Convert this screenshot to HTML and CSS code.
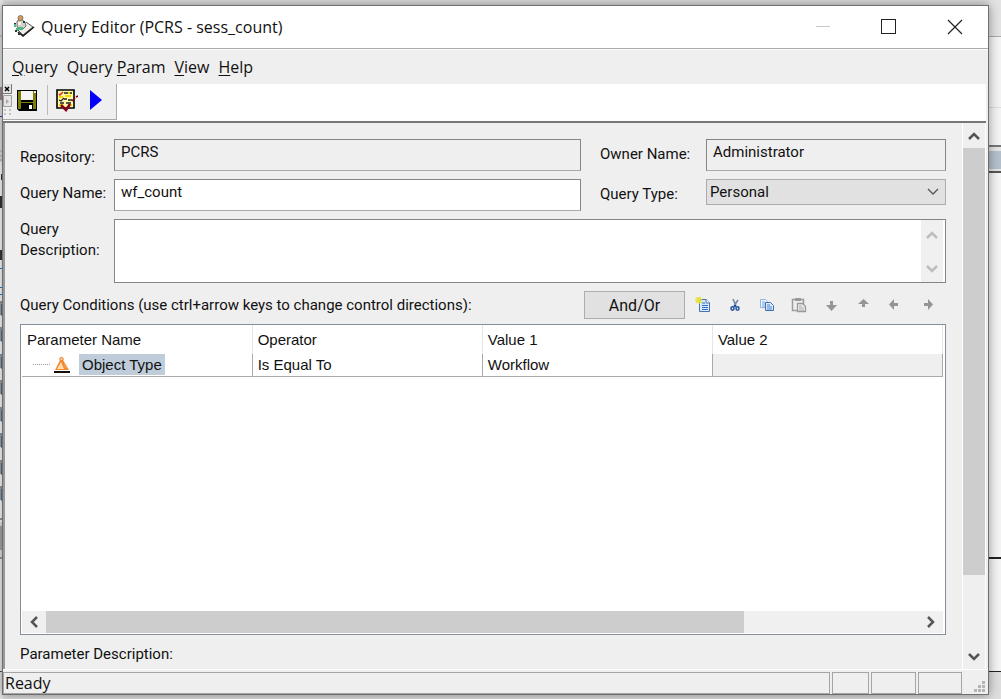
FILE: index.html
```html
<!DOCTYPE html>
<html lang="en">
<head>
<meta charset="utf-8">
<title>Query Editor (PCRS - sess_count)</title>
<link rel="stylesheet" href="styles.css">
</head>
<body>
<div class="desktop">
  <svg class="behind-left" width="3" height="699" viewBox="0 0 3 699" aria-hidden="true">
    <rect width="3" height="699" fill="#e6e6e6"/>
    <path d="M0 36h3M0 151h3M0 156h3M0 160h3" stroke="#b0b0b0"/>
    <rect y="87" width="3" height="13" fill="#a08a8c"/>
    <path d="M0 116.500h3v12" fill="none" stroke="#3436a0"/>
    <rect y="162" width="3" height="360" fill="#fff"/>
    <path d="M1 174h2v6H1zM0 196h2v12H0zM0 250h2v10H0z" fill="#3b3535"/>
    <path d="M0 268.500h3M0 287.500h3M0 294.500h3" stroke="#2384c6"/>
    <path d="M0 303h3v12H0zM0 329h3v12H0zM0 356h3v12H0zM0 382h3v12H0zM0 409h3v12H0zM0 435h3v12H0zM0 462h3v12H0zM0 488h3v12H0z" fill="#94a9bd"/>
    <path d="M0 302h3M2 304v12M0 328h3M2 330v12M0 355h3M2 357v12M0 381h3M2 383v12M0 408h3M2 410v12M0 434h3M2 436v12M0 461h3M2 463v12M0 487h3M2 489v12M0 519h3" stroke="#333a40"/>
    <rect y="526" width="3" height="24" fill="#aaa"/>
    <rect y="559" width="3" height="112" fill="#f4f4f4"/>
    <path d="M0 558h3M0 671.500h3" stroke="#555"/>
  </svg>

  <main class="window">
    <header class="titlebar">
      <svg class="app-icon" width="22" height="24" viewBox="0 0 22 24" aria-hidden="true">
        <path d="m6 17 3-5 5-4 6 5-10 9z" fill="#f1efec"/>
        <path d="m13 7 7 5-10 8-5-5" fill="none" stroke="#555" stroke-width="1"/>
        <path d="m21 12-11 9-5-4" fill="none" stroke="#1d1d1d" stroke-width="1.600"/>
        <path d="M4 6 8 4l4 3 1 4-4 4-5-3z" fill="#d5d0c6" stroke="#555" stroke-width=".8"/>
        <path d="M5 7h3v3H5z" fill="#f4f7f3"/>
        <path d="M1 9h2v3H1zM5 12h5v3H5zM3 13h2v3H3z" fill="#4fb884"/>
        <path d="M1 8h2v1H1zM10 6h2v2h-2zM2 15h2v2H2zM5 18h2v2H5z" fill="#203d30"/>
        <circle cx="7.500" cy="3" r="2.500" fill="#d69b5e" stroke="#75644b" stroke-width=".8"/>
      </svg>
      <h1 class="title">Query Editor (PCRS - sess_count)</h1>
      <div class="window-buttons">
        <button class="window-button" aria-label="Minimize" disabled><svg width="16" height="16"><path d="M1 7.500h14" stroke="#c9c9c9"/></svg></button>
        <button class="window-button" aria-label="Maximize"><svg width="16" height="16"><rect x=".5" y=".5" width="14" height="14" fill="none" stroke="#222"/></svg></button>
        <button class="window-button" aria-label="Close"><svg width="16" height="16"><path d="m1 1 14 14M15 1 1 15" stroke="#222" stroke-width="1.200"/></svg></button>
      </div>
    </header>

    <nav class="menubar">
      <button class="menu"><u>Q</u>uery</button>
      <button class="menu">Query <u>P</u>aram</button>
      <button class="menu"><u>V</u>iew</button>
      <button class="menu"><u>H</u>elp</button>
    </nav>

    <div class="toolstrip">
      <div class="toolbar" role="toolbar" aria-label="Query">
        <div class="grip">
          <button class="grip-button" aria-label="Close toolbar"><svg width="9" height="10"><path d="M0 0h9v10H0z" fill="#e2e2e2"/><path d="M8.500 0v9.500H0" fill="none" stroke="#777"/><path d="m2 3 4 4M6 3 2 7" stroke="#000" stroke-width="1.500"/></svg></button>
          <button class="grip-button" aria-label="Expand toolbar"><svg width="9" height="12"><path d="M.5.5h8v11h-8z" fill="#e6e6e6" stroke="#a0a0a0"/><path d="m3 4 3 2.500L3 9z" fill="#aaa"/></svg></button>
          <svg width="9" height="7" aria-hidden="true"><path d="M1 1h2v2H1zM6 1h2v2H6zM1 5h2v2H1zM6 5h2v2H6z" fill="#c4c4c4"/></svg>
        </div>
        <button class="tool" aria-label="Save"><svg width="20" height="21" viewBox="0 0 20 21"><path d="M0 0h20v21H2L0 19z" fill="#000"/><path d="M1 1h3v11h12V1h3v18H1z" fill="#7d7d08"/><path d="M4 1h12v9H4z" fill="#f5f5f5"/><path d="M4 13h12v7H4z" fill="#000"/><path d="M12 15h3v4h-3z" fill="#fff"/><path d="M17 1h2v2h-2z" fill="#eee"/></svg></button>
        <span class="tool-divider"></span>
        <button class="tool" aria-label="Validate"><svg width="22" height="24" viewBox="0 0 22 24"><path d="M1 2h17v18H1z" fill="#fff9a8" stroke="#000" stroke-width="1.600"/><path d="M8 5h8M8 11h3M12 12h4M4 15h4M10 15h5" stroke="#222" stroke-width="1.500"/><path d="M3 17h4M13 17h3M9 8h6M3 9h4M12 5h2" stroke="#f1d800" stroke-width="2"/><path d="m3 6 1 1 3-3" fill="none" stroke="#e22" stroke-width="1.500"/><path d="m3 12 2 1 3-3" fill="none" stroke="#222" stroke-width="1.300"/><path d="m5 17 5 5 4-6" fill="none" stroke="#89001a" stroke-width="2.600"/><path d="m16 13 3-3M20 9l2-1" stroke="#89001a" stroke-width="1.600"/></svg></button>
        <button class="tool" aria-label="Execute"><svg width="12" height="20" viewBox="0 0 12 20"><path d="m0 0 12 10L0 20z" fill="#0000f6"/></svg></button>
      </div>
    </div>

    <div class="client">
      <form class="form">
        <div class="fields">
          <label class="label low" for="repo">Repository:</label>
          <input class="field" id="repo" value="PCRS" readonly>
          <label class="label owner" for="owner">Owner Name:</label>
          <input class="field" id="owner" value="Administrator" readonly>

          <label class="label" for="name">Query Name:</label>
          <input class="field editable" id="name" value="wf_count">
          <label class="label owner" for="type">Query Type:</label>
          <div class="combo">
            <select class="select" id="type"><option>Personal</option></select>
            <svg class="combo-arrow" width="12" height="8" aria-hidden="true"><path d="m1 1 5 5 5-5" fill="none" stroke="#555" stroke-width="1.300"/></svg>
          </div>

          <label class="label top" for="desc">Query Description:</label>
          <div class="memo">
            <textarea class="memo-text" id="desc"></textarea>
            <div class="memo-scroll">
              <button type="button" class="arrow" aria-label="Scroll text up" disabled><svg width="12" height="10"><path d="m1 8 5-5 5 5" fill="none" stroke="#bdbdbd" stroke-width="2.500"/></svg></button>
              <button type="button" class="arrow" aria-label="Scroll text down" disabled><svg width="12" height="10"><path d="m1 2 5 5 5-5" fill="none" stroke="#bdbdbd" stroke-width="2.500"/></svg></button>
            </div>
          </div>
        </div>

        <div class="conditions">
          <span class="conditions-text">Query Conditions (use ctrl+arrow keys to change control directions):</span>
          <button type="button" class="and-or">And/Or</button>
          <div class="actions">
            <button type="button" class="action" aria-label="Add parameter"><svg width="16" height="16" viewBox="0 0 16 16"><path d="M4.500 2.500h7l3 3v9h-10z" fill="#d8eaff" stroke="#4c72ac"/><path d="M11 2v4h4" fill="#fff" stroke="#4c72ac"/><path d="M7 6h3M7 8.500h6M7 10.500h6M7 12.500h6" stroke="#356dc0"/><path d="M4 0v7M0 3h7M1 0l6 6M6 0 1 6" stroke="#e5df38" stroke-width="1.300"/></svg></button>
            <button type="button" class="action" aria-label="Cut"><svg width="16" height="16" viewBox="0 0 16 16"><path d="m6 2 3 7M11 3l-4 6" stroke="#7185a0" stroke-width="1.500"/><path d="M7 8h2v2H7z" fill="#214f9e"/><ellipse cx="5.500" cy="11.500" rx="1.500" ry="1.700" fill="none" stroke="#214f9e" stroke-width="1.500"/><ellipse cx="10.500" cy="11.500" rx="1.500" ry="1.700" fill="none" stroke="#214f9e" stroke-width="1.500"/></svg></button>
            <button type="button" class="action" aria-label="Copy"><svg width="16" height="16" viewBox="0 0 16 16"><path d="M1.500 2.500h5l2 2v6h-7z" fill="#edf5ff" stroke="#94b4dd"/><path d="M3 5h3M3 7h4M3 9h4" stroke="#73a5df"/><path d="M6.500 5.500h5l3 3v5h-8z" fill="#dceaff" stroke="#426faf"/><path d="M8 8h3M8 10h5M8 12h5" stroke="#4d84cd"/></svg></button>
            <button type="button" class="action" aria-label="Paste" disabled><svg width="16" height="16" viewBox="0 0 16 16"><path d="M1.500 2.500h11v11h-11z" fill="#eee" stroke="#9b9b9b" stroke-width="1.500"/><path d="M4 1h6v3H4z" fill="#999"/><path d="M6.500 6.500h5l3 3v5h-8z" fill="#eee" stroke="#999" stroke-width="1.300"/><path d="M8 9h3M8 11h5M8 13h5" stroke="#aaa"/></svg></button>
            <button type="button" class="action" aria-label="Move down" disabled><svg width="16" height="16"><path d="M7 4h3v4h4l-5.500 6L3 8h4z" fill="#959595"/></svg></button>
            <button type="button" class="action" aria-label="Move up" disabled><svg width="16" height="16"><path d="m8.500 2 5.500 5H10v3H7V7H3z" fill="#959595"/></svg></button>
            <button type="button" class="action" aria-label="Move left" disabled><svg width="16" height="16"><path d="m2 7.500 5-5.500v4h4v3H7v4z" fill="#959595"/></svg></button>
            <button type="button" class="action" aria-label="Move right" disabled><svg width="16" height="16"><path d="m14 7.500-5-5.500v4H5v3h4v4z" fill="#959595"/></svg></button>
          </div>
        </div>

        <div class="tree">
          <table class="grid">
            <thead><tr><th>Parameter Name</th><th>Operator</th><th>Value 1</th><th>Value 2</th></tr></thead>
            <tbody><tr>
              <td class="node"><div class="node-line"><span class="branch"></span><svg width="18" height="18" viewBox="0 0 18 18" aria-hidden="true"><path d="M1 15h16v2H1z" fill="#15100d"/><path d="M7 4h3l6 10H2z" fill="#f28a32"/><path d="m8 6-4 7h7z" fill="#ffdcae"/><path d="m11 7 1 5h2z" fill="#f7a352"/><circle cx="8.500" cy="3" r="1.700" fill="#ffd39b" stroke="#dc7e2c"/></svg><span class="selected">Object Type</span></div></td>
              <td>Is Equal To</td><td>Workflow</td><td class="disabled-cell"></td>
            </tr></tbody>
          </table>
          <div class="hscroll">
            <button type="button" class="arrow" aria-label="Scroll left"><svg width="10" height="12"><path d="M8 1 3 6l5 5" fill="none" stroke="#555" stroke-width="2.500"/></svg></button>
            <div class="htrack"><div class="hthumb"></div></div>
            <button type="button" class="arrow" aria-label="Scroll right"><svg width="10" height="12"><path d="m2 1 5 5-5 5" fill="none" stroke="#555" stroke-width="2.500"/></svg></button>
          </div>
        </div>
        <p class="parameter">Parameter Description:</p>
      </form>
      <div class="vscroll">
        <button type="button" class="arrow" aria-label="Scroll up"><svg width="12" height="10"><path d="m1 8 5-5 5 5" fill="none" stroke="#555" stroke-width="2.500"/></svg></button>
        <div class="vtrack"><div class="vthumb"></div></div>
        <button type="button" class="arrow" aria-label="Scroll down"><svg width="12" height="10"><path d="m1 2 5 5 5-5" fill="none" stroke="#555" stroke-width="2.500"/></svg></button>
      </div>
    </div>

    <footer class="statusbar">
      <span class="pane ready">Ready</span><span class="pane p1"></span><span class="pane p2"></span><span class="pane p3"></span>
      <svg class="size-grip" width="12" height="12" aria-hidden="true"><path d="M8 0h3v3H8zM4 4h3v3H4zM8 4h3v3H8zM0 8h3v3H0zM4 8h3v3H4zM8 8h3v3H8z" fill="#b5b5b5"/></svg>
    </footer>
  </main>

  <div class="behind-right">
    <div class="strip-a"></div><div class="strip-b"></div><div class="strip-c"></div><div class="strip-d"></div><div class="strip-e"></div>
  </div>
</div>
</body>
</html>
```
FILE: styles.css
```css
* { box-sizing: border-box; }
body {
  margin: 0;
  background: #dcdcdc;
  color: #111;
  font-family: Roboto, "Open Sans", sans-serif;
  font-size: 15px;
}
button, input, select, textarea { font: inherit; color: inherit; margin: 0; border-radius: 0; }
button { padding: 0; border: 0; background: none; }
svg { display: block; flex: none; }

.desktop { display: flex; min-height: 100vh; overflow: hidden; }
.behind-left { margin-right: -1px; }
.window {
  flex: 1;
  min-width: 0;
  margin: 5px 0 4px;
  display: flex;
  flex-direction: column;
  background: #efefef;
  border: 1px solid #6f6f6f;
  box-shadow: 0 0 10px #0006;
  z-index: 1;
}

.behind-right { width: 12px; display: flex; flex-direction: column; background: #f4f4f4; }
.strip-a { height: 37px; background: #e3e3e3; border-bottom: 1px solid #aaa; }
.strip-b { height: 71px; border-bottom: 1px solid #ddd; }
.strip-c { height: 39px; border-bottom: 2px solid #777; }
.strip-d { height: 26px; background: #b4c1cd; border-top: 4px solid #e5e5e5; border-bottom: 2px solid #555; box-shadow: inset 0 -2px #e5e5e5; }
.strip-e { flex: 1; background: linear-gradient(#f4f4f4 384px, #222 384px, #222 386px, #f4f4f4 386px, #f4f4f4 498px, #222 498px, #222 499px, #dedede 499px); }

.titlebar { display: flex; align-items: center; height: 43px; padding-left: 10px; background: #fff; border-bottom: 1px solid #aaa; font-family: "Open Sans", sans-serif; }
.title { margin: 0 auto 0 6px; font-size: 16px; font-weight: 400; }
.window-buttons { display: flex; }
.window-button { width: 66px; height: 42px; display: grid; place-items: center; }

.menubar { display: flex; gap: 9px; height: 35px; padding: 0 9px; border-top: 1px solid #fff; font-family: "Open Sans", sans-serif; font-size: 16px; }
.menu { line-height: 34px; }
.menu u { text-underline-offset: 2px; }

.toolstrip { height: 39px; background: #fff; border-bottom: 2px solid #777; margin-right: 2px; }
.toolbar { display: flex; align-items: center; width: 114px; height: 36px; padding-bottom: 3px; background: #efefef; border-right: 1px solid #aaa; border-bottom: 1px solid #aaa; }
.grip { width: 9px; height: 32px; display: flex; flex-direction: column; gap: 1px; margin-right: 5px; }
.grip-button { display: block; }
.tool-divider { width: 1px; height: 30px; background: #bbb; margin: 0 8px 0 10px; }
.tool + .tool { margin-left: 12px; }

.client { flex: 1; display: flex; margin-right: 2px; border-left: 2px solid #999; }
.form { flex: 1; min-width: 0; padding: 16px 16px 0 15px; display: flex; flex-direction: column; }
.fields { display: grid; grid-template-columns: 94px minmax(0, 467fr) 125px minmax(0, 240fr); grid-template-rows: 32px 32px 64px; row-gap: 8px; }
.label { line-height: 21px; padding-top: 4px; }
.label.low { padding-top: 8px; }
.label.owner { padding-left: 19px; padding-top: 5px; }
.label.top { padding-top: 0; }
.field { width: 100%; height: 32px; padding: 0 6px 6px; background: #efefef; border: 1px solid #858585; border-bottom-color: #aaa; outline: 0; }
.editable { background: #fff; }
.combo { position: relative; height: 26px; }
.select { appearance: none; width: 100%; height: 26px; padding: 0 3px; background: #e1e1e1; border: 1px solid #acacac; }
.combo-arrow { position: absolute; right: 7px; top: 9px; }
.memo { grid-column: 2 / -1; display: flex; border: 1px solid #858585; background: #fff; padding-right: 2px; }
.memo-text { flex: 1; border: 0; resize: none; outline: 0; overflow: hidden; padding: 4px 6px; }
.memo-scroll { width: 22px; padding: 10px 0 8px; background: #f0f0f0; display: flex; flex-direction: column; justify-content: space-between; }
.arrow { display: grid; place-items: center; }

.conditions { display: flex; align-items: center; height: 28px; margin-top: 8px; }
.conditions-text { flex: 1; white-space: nowrap; }
.and-or { width: 101px; height: 28px; background: #e1e1e1; border: 1px solid #adadad; font-size: 16px; }
.actions { display: flex; gap: 16px; margin: 0 11px 0 10px; }

.tree { flex: 1; display: flex; flex-direction: column; margin-top: 5px; background: #fff; border: 1px solid #868e9b; padding: 0 2px 1px 1px; }
.grid { width: 100%; border-collapse: collapse; table-layout: fixed; font: 15px "Liberation Sans", Arial, sans-serif; }
.grid th { height: 29px; padding: 0 5px; font-weight: 400; text-align: left; border-right: 1px solid #e4e4e4; }
.grid td { height: 22px; padding: 0 5px; border-right: 1px solid #aaa; border-bottom: 1px solid #aaa; }
.grid .node { padding: 0 0 0 11px; }
.node-line { display: flex; align-items: center; }
.branch { width: 17px; border-top: 1px dotted #999; margin-right: 3px; }
.selected { margin-left: 8px; padding: 0 3px; line-height: 21px; background: #bfcddb; }
.grid .disabled-cell { background: #efefef; }
.hscroll { height: 22px; margin-top: auto; display: flex; background: #f0f0f0; }
.hscroll .arrow { width: 24px; }
.htrack { flex: 1; }
.hthumb { width: 80%; height: 22px; background: #cdcdcd; }
.parameter { margin: 0; height: 34px; line-height: 38px; }

.vscroll { width: 24px; display: flex; flex-direction: column; border-left: 1px solid #fff; border-right: 1px solid #fff; }
.vscroll .arrow { height: 25px; }
.vtrack { flex: 1; }
.vthumb { height: 86%; background: #cdcdcd; }

.statusbar { display: flex; align-items: stretch; height: 25px; gap: 2px; border-top: 1px solid #fff; padding-top: 2px; }
.pane { border: 1px solid #a5a5a5; }
.ready { flex: 1; padding-left: 1px; font-family: "Open Sans", sans-serif; font-size: 16px; line-height: 21px; }
.p1 { width: 37px; }
.p2 { width: 45px; }
.p3 { width: 44px; }
.size-grip { align-self: flex-end; margin: 0 2px 1px 10px; }
```
